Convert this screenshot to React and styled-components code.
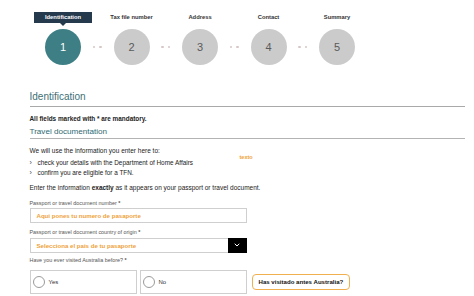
import React from 'react';
import styled, { createGlobalStyle } from 'styled-components';
import { ChevronDown } from 'lucide-react';

const GlobalStyle = createGlobalStyle`
  html, body {
    margin: 0;
    padding: 0;
    background: #ffffff;
    font-family: "Liberation Sans", Arial, sans-serif;
    color: #222;
  }
`;

const Page = styled.div`
  width: 474px;
  height: 296px;
  overflow: hidden;
  position: relative;
`;

const StepsBar = styled.div`
  display: flex;
  align-items: flex-start;
  padding: 12px 0 0 45px;
`;

const Step = styled.div`
  width: 36px;
  display: flex;
  flex-direction: column;
  align-items: center;
  gap: 6px;
`;

const StepLabel = styled.div`
  position: relative;
  height: 11px;
  line-height: 11px;
  font-size: 5.8px;
  font-weight: 700;
  white-space: nowrap;
  padding: 0 10.5px;
  color: ${p => (p.$active ? '#fff' : '#333')};
  background: ${p => (p.$active ? '#263a4d' : 'transparent')};

  &::after {
    content: '';
    display: ${p => (p.$active ? 'block' : 'none')};
    position: absolute;
    left: 50%;
    bottom: -3px;
    margin-left: -3px;
    border-left: 3px solid transparent;
    border-right: 3px solid transparent;
    border-top: 3px solid #263a4d;
  }
`;

const Circle = styled.div`
  width: 36px;
  height: 36px;
  border-radius: 50%;
  display: flex;
  align-items: center;
  justify-content: center;
  font-size: 11px;
  background: ${p => (p.$active ? '#3d7f84' : '#cbcbcb')};
  color: ${p => (p.$active ? '#fff' : '#5a5a5a')};
`;

const Connector = styled.div`
  width: 32.5px;
  height: 36px;
  margin-top: 17px;
  display: flex;
  align-items: center;
  justify-content: center;
  gap: 4px;
`;

const Dot = styled.span`
  width: 2.5px;
  height: 2.5px;
  border-radius: 50%;
  background: #d6c6c6;
`;

const Section = styled.div`
  position: relative;
  margin: 26px 0 0 29.5px;
  width: 435px;
`;

const Heading = styled.h1`
  margin: 0;
  font-size: 10px;
  line-height: 12px;
  font-weight: 400;
  color: #3c6f76;
  padding-bottom: 3px;
  border-bottom: 1.5px solid #a9a9a9;
`;

const Mandatory = styled.p`
  margin: 7.5px 0 0;
  font-size: 6.4px;
  line-height: 8px;
  font-weight: 700;
`;

const SubHeading = styled.h2`
  margin: 4px 0 0;
  font-size: 8.1px;
  line-height: 10px;
  font-weight: 400;
  color: #2f6a72;
  padding-bottom: 1.5px;
  border-bottom: 1.5px solid #b3b3b3;
`;

const Text = styled.p`
  margin: ${p => p.$mt || 0}px 0 0;
  font-size: 6.5px;
  line-height: 8px;
`;

const BulletList = styled.ul`
  list-style: none;
  margin: 3px 0 0;
  padding: 0;
`;

const Bullet = styled.li`
  display: flex;
  align-items: center;
  gap: 4px;
  font-size: 6.4px;
  line-height: 10px;
`;

const Chevron = styled.span`
  width: 4px;
  font-size: 7px;
  color: #444;
`;

const Note = styled.span`
  position: absolute;
  left: 210px;
  top: 63px;
  font-size: 5.5px;
  font-weight: 700;
  color: #eea23a;
`;

const Label = styled.div`
  margin-top: ${p => p.$mt}px;
  margin-bottom: ${p => p.$mb}px;
  font-size: 5.4px;
  line-height: 8px;
  color: #555;
`;

const Field = styled.div`
  width: 217px;
  height: 15px;
  box-sizing: border-box;
  border: 1px solid #cfcfcf;
  display: flex;
  align-items: center;
  justify-content: space-between;
  padding-left: 6px;
  font-size: 6.1px;
  font-weight: 700;
  color: #eea23a;
`;

const SelectButton = styled.div`
  width: 19px;
  height: 15px;
  margin-right: -1px;
  background: #000;
  color: #fff;
  display: flex;
  align-items: center;
  justify-content: center;
`;

const RadioRow = styled.div`
  display: flex;
  align-items: center;
  gap: 3px;
`;

const RadioBox = styled.label`
  width: 107px;
  height: 24px;
  box-sizing: border-box;
  border: 1px solid #cfcfcf;
  display: flex;
  align-items: center;
  gap: 4px;
  padding-left: 2px;
  font-size: 6px;
  color: #333;
`;

const RadioCircle = styled.span`
  width: 12px;
  height: 12px;
  box-sizing: border-box;
  border-radius: 50%;
  border: 1px solid #9a9a9a;
  background: #fff;
`;

const Hint = styled.div`
  margin-left: 2px;
  height: 16px;
  box-sizing: border-box;
  padding: 0 6px;
  border: 1.5px solid #f0b050;
  border-radius: 4px;
  display: flex;
  align-items: center;
  font-size: 6.1px;
  font-weight: 700;
  color: #111;
`;

const steps = ['Identification', 'Tax file number', 'Address', 'Contact', 'Summary'];

export default function App() {
  return (
    <Page>
      <GlobalStyle />
      <StepsBar>
        {steps.map((name, i) => (
          <React.Fragment key={name}>
            {i > 0 && (
              <Connector>
                <Dot />
                <Dot />
              </Connector>
            )}
            <Step>
              <StepLabel $active={i === 0}>{name}</StepLabel>
              <Circle $active={i === 0}>{i + 1}</Circle>
            </Step>
          </React.Fragment>
        ))}
      </StepsBar>

      <Section>
        <Heading>Identification</Heading>
        <Mandatory>All fields marked with * are mandatory.</Mandatory>
        <SubHeading>Travel documentation</SubHeading>
        <Text $mt={7.5}>We will use the information you enter here to:</Text>
        <Note>texto</Note>
        <BulletList>
          <Bullet><Chevron>›</Chevron>check your details with the Department of Home Affairs</Bullet>
          <Bullet><Chevron>›</Chevron>confirm you are eligible for a TFN.</Bullet>
        </BulletList>
        <Text $mt={6}>
          Enter the information <b>exactly</b> as it appears on your passport or travel document.
        </Text>

        <Label $mt={7} $mb={1}>Passport or travel document number <b>*</b></Label>
        <Field>Aqui pones tu numero de pasaporte</Field>

        <Label $mt={5} $mb={2}>Passport or travel document country of origin <b>*</b></Label>
        <Field>
          Selecciona el pais de tu pasaporte
          <SelectButton><ChevronDown size={8} strokeWidth={3} /></SelectButton>
        </Field>

        <Label $mt={3} $mb={6}>Have you ever visited Australia before? <b>*</b></Label>
        <RadioRow>
          <RadioBox><RadioCircle />Yes</RadioBox>
          <RadioBox><RadioCircle />No</RadioBox>
          <Hint>Has visitado antes Australia?</Hint>
        </RadioRow>
      </Section>
    </Page>
  );
}
